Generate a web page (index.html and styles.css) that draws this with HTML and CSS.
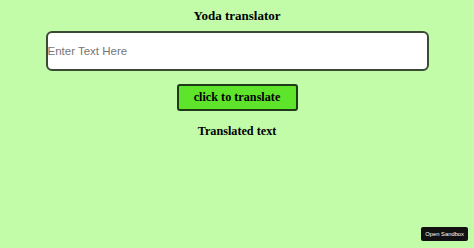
FILE: index.html
```html
<!DOCTYPE html>
<html>
<head>
<meta charset="utf-8">
<link rel="stylesheet" href="styles.css">
</head>
<body>
<main class="app">
  <h1 class="title">Yoda translator</h1>
  <input class="text-input" type="text" placeholder="Enter Text Here">
  <button class="translate-btn">click to translate</button>
  <h2 class="output">Translated text</h2>
</main>
<a class="sandbox-btn">Open Sandbox</a>
</body>
</html>
```
FILE: styles.css
```css
html, body {
  margin: 0;
  height: 100%;
}
body {
  background: #c3fca9;
  font-family: "Liberation Serif", "Times New Roman", serif;
  color: #000;
  position: relative;
  overflow: hidden;
}
.app {
  display: flex;
  flex-direction: column;
  align-items: center;
  padding-top: 7px;
}
.title {
  margin: 0;
  font-size: 13px;
  font-weight: bold;
  line-height: 17px;
}
.text-input {
  margin-top: 7px;
  width: 383px;
  height: 40px;
  box-sizing: border-box;
  border: 2px solid #3a4a35;
  border-radius: 6px;
  background: #fff;
  padding: 0 0 0 0;
  font-family: "Liberation Sans Narrow", "Arial Narrow", "Liberation Sans", sans-serif;
  font-size: 11.5px;
  outline: none;
}
.text-input::placeholder {
  color: #767676;
}
.translate-btn {
  margin-top: 13px;
  width: 121px;
  height: 27px;
  box-sizing: border-box;
  background: #5ee52b;
  border: 2px solid #1f3a16;
  border-radius: 3px;
  font-family: "Liberation Serif", "Times New Roman", serif;
  font-weight: bold;
  font-size: 12.2px;
  color: #000;
  padding: 0;
}
.output {
  margin: 12px 0 0;
  font-size: 12.2px;
  font-weight: bold;
  line-height: 16px;
}
.sandbox-btn {
  position: absolute;
  right: 6px;
  bottom: 7px;
  background: #111;
  color: #fff;
  font-family: "Liberation Sans Narrow", "Liberation Sans", Arial, sans-serif;
  font-size: 5.8px;
  padding: 4px 4px;
  border-radius: 2px;
}
```
